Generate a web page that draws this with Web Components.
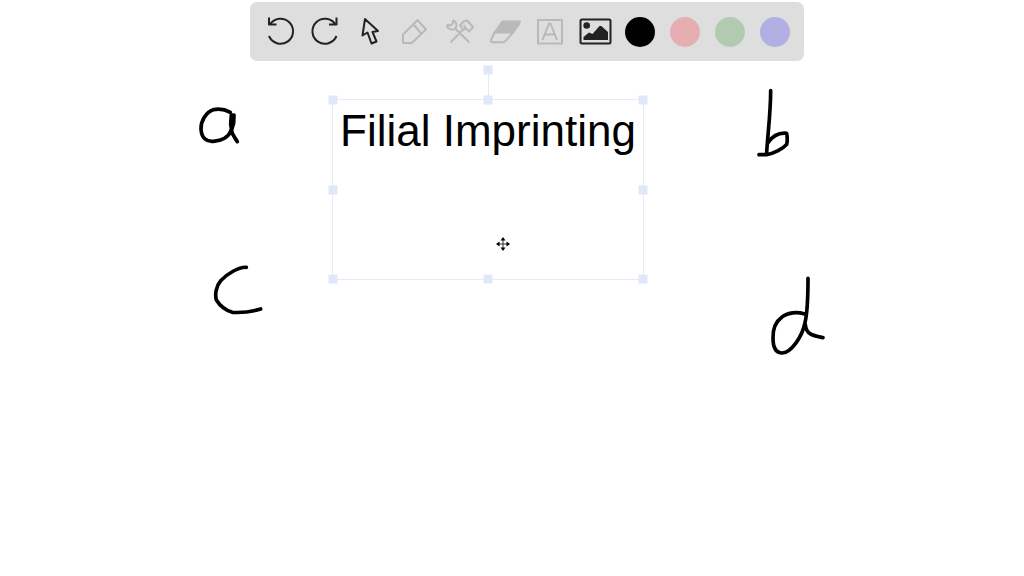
<!DOCTYPE html>
<html lang="en">
<head>
<meta charset="utf-8">
<meta name="viewport" content="width=device-width, initial-scale=1">
<title>Whiteboard</title>
<style>
  body { margin: 0; background: #fff; font-family: "Liberation Sans", Arial, sans-serif; }
</style>
</head>
<body>
<white-board></white-board>

<template id="white-board">
  <style>
    :host { display: flex; flex-direction: column; min-height: 100vh; }
    header { display: flex; justify-content: center; padding: 2px 0 0 30px; }
    main { flex: 1; display: grid; }
  </style>
  <header>
    <tool-bar>
      <tool-button label="Undo"><svg viewBox="0 0 31 31"><path d="M5 20A12.500 12.500 0 1 0 6 8.500M5 1.500V8.500H12.500"/></svg></tool-button>
      <tool-button label="Redo"><svg viewBox="0 0 31 31"><path d="M27.500 20A12.500 12.500 0 1 1 26.500 8.500M27.500 1.500V8.500H20"/></svg></tool-button>
      <tool-button label="Select"><svg viewBox="0 0 31 31"><path d="M11 3L8.500 19.500L13.500 16.500L17.500 27.500L22.500 25.500L18.500 16L24 15Z"/></svg></tool-button>
      <tool-button label="Pen" disabled><svg viewBox="0 0 31 31"><path d="M4 27V18.500L18.500 4L27 13.500L12.700 27ZM14.500 8.500L22.500 18"/></svg></tool-button>
      <tool-button label="Tools" disabled><svg viewBox="0 0 31 31"><path d="M3.200 8.700C2.500 12.500 7 14.800 10.800 12.800C13.800 10 12.500 5 8.700 4.500M3.200 8.700L6.500 9.500L9 7.500L8.700 4.500M11.500 13L25.500 26.500M6.500 26.500L19 13.500M16 9.500L19.500 5.500L23 4.500L29 11L25 15.500L22 12.500L19.500 14ZM19.500 9L22 12.500"/></svg></tool-button>
      <tool-button label="Eraser" disabled><svg viewBox="0 0 31 31"><path class="solid" d="M13.300 5.500H31L24 16.500H5.500Z"/><path d="M5.500 16.500L2 24Q1.500 26.300 3.500 26.300H13.500Q15.500 26.300 17 24.500L24 16.500L30.500 7.500"/></svg></tool-button>
      <tool-button label="Text box" disabled><svg viewBox="0 0 31 31"><path d="M4 4H28V27.500H4ZM8.500 24L15 7.500H16.500L23 24M11 18.500H20.500"/></svg></tool-button>
      <tool-button label="Image"><svg viewBox="0 0 31 31"><rect x="1.500" y="3.500" width="30" height="24" rx="1.500"/><circle class="solid plain" cx="7.700" cy="9.500" r="3.300"/><path class="solid plain" d="M4.500 24V21L10 16.500L13.500 18L20.500 10H22.300L29 16V24Z"/></svg></tool-button>
      <color-swatch label="Black" style="--ink:#000" checked></color-swatch>
      <color-swatch label="Red" style="--ink:#e5afb1"></color-swatch>
      <color-swatch label="Green" style="--ink:#b0cbb0"></color-swatch>
      <color-swatch label="Purple" style="--ink:#b2afe3"></color-swatch>
    </tool-bar>
  </header>
  <main>
    <drawing-canvas>
      <ink-stroke style="left:190px;top:34px;width:60px;height:60px">
        <svg viewBox="0 0 180 180"><path d="M121 52C105 43 85 41 70 44C48 51 32 78 33 103C35 130 50 141 70 139C95 138 116 126 124 105"/><path fill="#000" d="M124 60H132L131 84L125 104L122 88Z"/><path d="M124 106C127 120 134 127 142 140"/></svg>
      </ink-stroke>
      <ink-stroke style="left:750px;top:19px;width:50px;height:85px">
        <svg viewBox="0 0 150 255"><path d="M62 32C62 95 54 155 50 217M27 224H50C70 221 98 207 110 193C112 184 112 170 110 160C85 157 68 168 54 188"/></svg>
      </ink-stroke>
      <ink-stroke style="left:205px;top:194px;width:70px;height:70px">
        <svg viewBox="0 0 210 210"><path d="M124 37C103 35 68 55 47 77C32 94 30 120 34 135C44 151 62 166 82 172C118 174 141 170 167 162"/></svg>
      </ink-stroke>
      <ink-stroke style="left:760px;top:209px;width:75px;height:95px">
        <svg viewBox="0 0 225 285"><path d="M144 25C144 80 143 125 135 158C127 200 94 247 67 249C46 249 39 230 39 205C38 175 46 155 67 140C84 127 111 125 134 132M136 164C138 194 160 197 189 203"/></svg>
      </ink-stroke>
      <text-box style="left:332px;top:38px" value="Filial Imprinting"></text-box>
      <move-cursor style="left:496px;top:176px"></move-cursor>
    </drawing-canvas>
  </main>
</template>

<script>
  const define = (name, markup, setup) => customElements.define(name, class extends HTMLElement {
    constructor() {
      super();
      this.attachShadow({ mode: "open" });
    }
    connectedCallback() {
      this.shadowRoot.innerHTML = markup;
      if (setup) setup(this, this.shadowRoot);
    }
  });

  define("tool-bar", `
    <style>
      :host { display: block; }
      div { display: grid; grid-template-columns: repeat(12, 45px); align-items: center;
            padding: 7px; background: #dedede; border-radius: 7px; }
    </style>
    <div role="toolbar" aria-label="Drawing tools"><slot></slot></div>`);

  define("tool-button", `
    <style>
      :host { display: block; color: #222; }
      :host([disabled]) { color: #b9b9b9; }
      button { display: flex; justify-content: center; align-items: center; width: 100%; height: 45px;
               padding: 0; border: 0; background: none; color: inherit; }
      ::slotted(svg) { display: block; width: 31px; height: 31px; overflow: visible; fill: none;
                       stroke: currentColor; stroke-width: 2; stroke-linejoin: round; }
    </style>
    <button type="button"><slot></slot></button>`, (host, root) => {
      const button = root.querySelector("button");
      button.setAttribute("aria-label", host.getAttribute("label"));
      button.disabled = host.hasAttribute("disabled");
      for (const shape of host.querySelectorAll(".solid")) shape.setAttribute("fill", "currentColor");
      for (const shape of host.querySelectorAll(".plain")) shape.setAttribute("stroke", "none");
    });

  define("color-swatch", `
    <style>
      :host { display: flex; justify-content: center; align-items: center; }
      input { appearance: none; width: 30px; height: 30px; margin: 0; border-radius: 50%; background: var(--ink); }
    </style>
    <input type="radio" name="ink">`, (host, root) => {
      const input = root.querySelector("input");
      input.setAttribute("aria-label", host.getAttribute("label"));
      input.checked = host.hasAttribute("checked");
    });

  define("drawing-canvas", `
    <style>:host { display: block; position: relative; overflow: hidden; }</style>
    <slot></slot>`);

  define("ink-stroke", `
    <style>
      :host { display: block; position: absolute; }
      ::slotted(svg) { display: block; width: 100%; height: 100%; fill: none; stroke: #000;
                       stroke-width: 11; stroke-linecap: round; stroke-linejoin: round; }
    </style>
    <slot></slot>`);

  define("text-box", `
    <style>
      :host { display: block; position: absolute; }
      .frame { position: relative; border: 1px solid #e6eaf8; }
      textarea { display: block; box-sizing: border-box; width: 310px; height: 179px; margin: 0; padding: 6px 7px;
                 border: 0; outline: 0; resize: none; overflow: hidden; background: none; color: #000;
                 font: 44px/50px "Liberation Sans", Arial, sans-serif; white-space: pre; }
      i { position: absolute; width: 9px; height: 9px; background: #e0e7f9; transform: translate(-50%, -50%); }
      .top { top: 0; } .middle { top: 50%; } .bottom { top: 100%; }
      .left { left: 0; } .center { left: 50%; } .right { left: 100%; }
      .stem { position: absolute; left: 50%; bottom: 100%; height: 30px; border-left: 1px solid #e6eaf8; }
      .turn { left: 50%; top: -30px; }
    </style>
    <div class="frame">
      <textarea aria-label="Text" spellcheck="false"></textarea>
      <span class="stem"></span><i class="turn"></i>
      <i class="top left"></i><i class="top center"></i><i class="top right"></i>
      <i class="middle left"></i><i class="middle right"></i>
      <i class="bottom left"></i><i class="bottom center"></i><i class="bottom right"></i>
    </div>`, (host, root) => {
      root.querySelector("textarea").textContent = host.getAttribute("value");
    });

  define("move-cursor", `
    <style>
      :host { display: block; position: absolute; pointer-events: none; }
      svg { display: block; width: 14px; height: 14px; }
    </style>
    <svg viewBox="0 0 14 14" aria-hidden="true">
      <path d="M7 2V12M2 7H12" stroke="#333"/>
      <path d="M7 0L9.500 3.500H4.500ZM7 14L9.500 10.500H4.500ZM0 7L3.500 4.500V9.500ZM14 7L10.500 4.500V9.500Z"/>
    </svg>`);

  customElements.define("white-board", class extends HTMLElement {
    constructor() {
      super();
      this.attachShadow({ mode: "open" })
        .append(document.getElementById("white-board").content.cloneNode(true));
    }
  });
</script>
</body>
</html>
